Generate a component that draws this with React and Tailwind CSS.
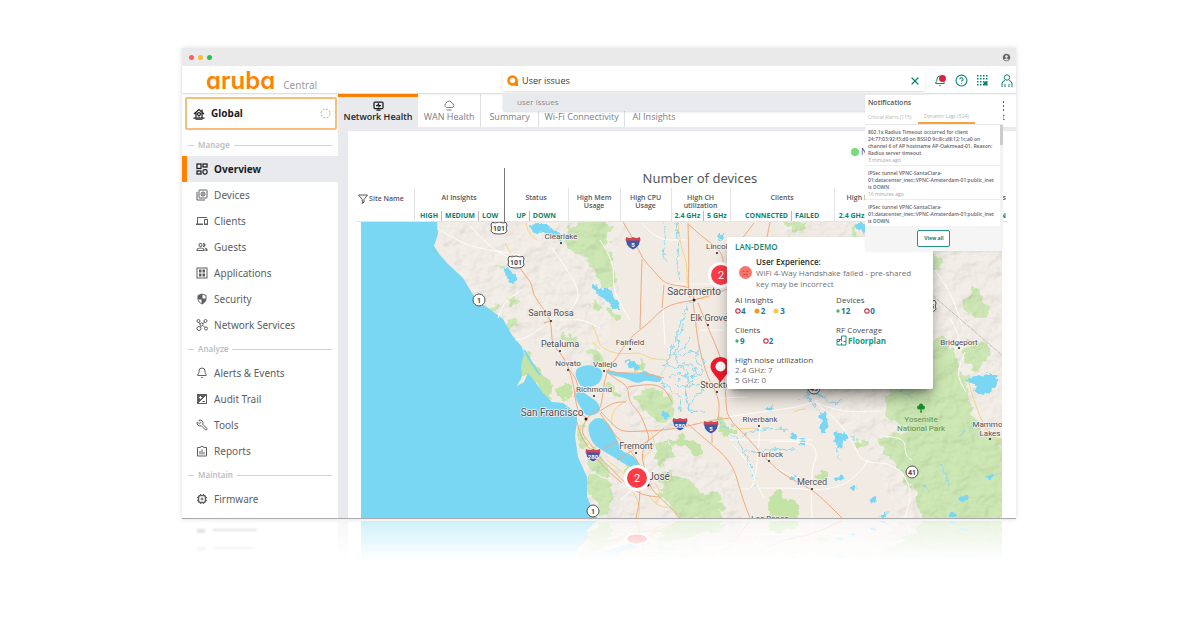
import React from "react";
import { X, Bell, CircleHelp, Cloud, Wrench, House, Wifi, Sparkles, FileText } from "lucide-react";
import { MdOutlineDevices, MdOutlinePeopleAlt, MdAccountCircle } from "react-icons/md";

const orangeRoads = [
  "M623 222L634 240 642 258 653 270 665 284 683 286 690 288 694 299",
  "M642 259L641 290 640 329",
  "M695 300L680 302 663 308 652 320 640 330 630 338 622 349 618 356 610 366 605 378 603 392 601 408 595 412 588 417",
  "M664 285L662 308",
  "M688 223L689 260 688 287 690 298",
  "M688 224L706 240 717 247 724 258 722 272",
  "M694 300L712 295 730 288",
  "M693 302L696 325 698 342 703 362 708 378 719 398 719 412 718 420 712 427 712 443",
  "M698 303L709 330 720 355 724 372 726 400 727 417 747 437 758 450 770 463 783 474 797 482 813 490 828 504 842 518",
  "M601 412L612 424 622 432 645 431 667 430 693 425 712 420 730 418",
  "M688 424L699 434 710 443 724 455 733 467 738 482 742 497 750 518",
  "M607 372L617 380 628 386 629 402 640 413 646 428 650 440 641 452 644 466 650 487 657 495 668 505 680 518",
  "M628 387L645 384 663 386 672 402",
  "M588 417L579 430 590 443 600 458 610 467 621 479 630 487 642 495 658 497",
  "M577 422L580 436 592 452 604 468 622 483",
  "M600 413L611 430 621 442 632 452 640 466 651 482",
  "M617 460L628 453 650 440 664 428",
  "M603 449L618 441",
  "M512 255L522 272 532 283 533 295 543 308 551 320 552 345 560 352 568 366 573 382 575 395 577 410 586 418",
  "M544 323L551 321",
  "M568 368L580 382 574 397",
  "M606 370L618 374 640 372 664 378",
  "M770 222L766 243M754 223L741 240",
  "M640 487L640 500 636 518",
  "M600 411L613 402 626 402",
];
const yellowRoads = [
  "M505 243L511 254",
  "M526 223L528 233 537 240",
  "M592 325L598 337 600 347 618 355 640 352 650 359 668 360",
  "M678 223L680 245 687 262 687 285",
  "M648 495L656 505 668 508M655 483L662 492 656 505",
  "M612 425L610 412 627 400M650 430L658 444 643 458",
  "M600 349L592 342",
  "M695 291L708 286 716 290 710 298 697 299",
  "M738 429L755 428",
  "M794 412L800 409 806 409",
  "M968 380L974 402 985 428 995 438 1003 441",
  "M607 460L630 478 640 490M633 492L641 505 638 518",
];
const whiteRoads = [
  "M437 228L460 243 488 250 520 255",
  "M470 226L488 246 510 258M552 248L575 280 580 300 560 320",
  "M522 290L505 300 498 318M560 320L580 318 600 328",
  "M552 320L528 338 515 340M733 445L748 460 757 485 764 498",
  "M668 284L730 284M700 330L724 330M663 308L665 345",
  "M730 440L770 440 813 440M760 425L757 489 740 489",
  "M770 442L810 440 818 454 811 470 812 518M813 490L840 489 862 470 868 460",
  "M815 402L835 412 880 411M815 402L838 420 855 446 862 463 895 463 913 489 905 518",
  "M878 436L905 436 905 455 912 460M760 488L795 488 812 490",
  "M771 465L800 480M720 398L748 397M642 223L655 240 686 240",
  "M965 352L955 372 966 392M950 318L962 338 954 352",
  "M727 417L760 412 800 407 818 400M935 270L950 290 962 325",
  "M600 240L615 262 612 290 630 320M620 500L655 470",
];
const bays = [
  "M577 368L590 364 603 370 602 379 596 386 582 388 577 380 575 373Z",
  "M578 388L587 395 598 402 601 411 594 415 586 416 581 408 575 398Z",
  "M588 424L597 417 606 420 613 431 618 442 621 451 634 456 639 464 637 469 626 465 617 459 605 452 594 445 589 435Z",
  "M606 370L616 372 628 373 640 374 644 370 650 374 663 377 660 383 646 380 637 384 626 378 615 376 606 373Z",
];
const lakes = [
  "M529 223L548 223 551 229 560 232 563 239 561 243 552 236 541 232 531 231Z",
  "M590 281L601 290 606 287 612 294 617 300 622 312 613 309 608 300 597 295Z",
  "M502 269L508 267 512 273 518 276 516 284 508 281 507 276Z",
  "M627 358L634 361 641 368 633 370 627 366Z",
  "M967 378L974 378 984 374 996 375 998 384 992 391 982 395 973 390 977 384 969 383Z",
  "M818 413L827 411 829 421 826 428 828 434 819 431 823 422Z",
  "M832 432L840 431 852 438 843 440 844 450 837 446Z",
  "M798 439L807 439 806 446 799 446Z",
  "M871 498L877 495 875 504 869 503Z",
  "M985 478L993 473 995 477 989 481Z",
  "M957 498L969 495 967 501 959 502Z",
  "M851 485L856 485 854 492 850 491Z",
  "M881 514L887 511 886 518 880 518Z",
  "M950 511L958 514 956 518 949 518Z",
  "M765 407L774 405 773 412 767 411Z",
  "M855 223L866 223 866 234 858 230Z",
  "M716 235L723 232 725 238 720 241Z",
  "M663 412L670 413 667 420 662 417Z",
  "M790 434L797 433 796 440 790 438Z",
  "M789 476L796 476 795 480 789 480Z",
  "M833 478L837 476 845 477 842 481 835 480Z",
];
const streams = [
  "M663 223L667 240 662 252 667 262",
  "M676 224L680 246 676 262 680 280",
  "M690 300L684 314 682 334 672 344 668 362 660 377",
  "M684 318L676 330 680 342 673 357 684 368 690 380 684 392 689 410",
  "M668 355L685 356 690 350 703 356 704 372 694 378 678 373 670 378",
  "M663 365L676 369 686 362 697 368 690 385 673 388 680 378",
  "M682 388L698 382 706 390 692 398 686 412 706 411",
  "M690 336L686 348 677 352M700 345L694 362 703 366",
  "M652 374L662 384 674 390 683 402 679 412",
  "M718 420L730 432 742 446 749 464 756 480 757 487",
  "M742 436L755 430 775 428 790 431",
  "M745 452L765 450 795 449M808 370L806 396 814 404 820 414",
  "M798 400L815 388 832 406 841 400",
  "M840 440L836 450 841 462M850 435L858 444",
  "M940 464L950 480 948 490M975 420L971 428M988 372L985 380",
  "M922 484L929 492M965 430L958 438M900 391L912 396",
];
const greens = [
  "M884 400L900 372 925 360 930 340 945 338 955 354 962 372 970 378 967 396 975 412 983 432 1003 444 1010 450 1010 526 920 526 918 500 906 480 897 466 880 448 878 438 905 434 900 424 885 416Z",
  "M577 219L612 219 606 240 614 252 610 262 618 280 604 288 594 278 588 262 578 250 570 252 564 240Z",
  "M963 298L972 294 975 282 981 300 991 306 986 316 973 314 966 318Z",
  "M961 346L978 340 991 350 987 364 976 371 962 360Z",
  "M525 350L534 360 546 376 554 402 544 394 532 380 524 371 518 386 520 368Z",
  "M556 386L564 381 576 390 570 401 559 398Z",
  "M509 297L519 298 518 304 509 304Z",
  "M486 305L498 306 495 311 487 310Z",
  "M503 320L515 318 519 325 510 330Z",
  "M498 265L506 267 502 272Z",
  "M632 393L650 387 664 391 673 404 675 420 660 425 650 412 638 410Z",
  "M653 441L668 439 675 450 667 465 655 461Z",
  "M656 474L672 472 684 479 696 489 708 498 722 505 724 522 678 522 668 502 660 494Z",
  "M584 476L600 474 612 488 614 504 604 518 596 506 588 495Z",
  "M666 440L690 436 704 448 702 457 684 449Z",
  "M630 360L646 362 645 371 635 373Z",
  "M768 490L782 492 790 504 800 510 798 522 770 518Z",
  "M853 440L867 435 870 447 859 450Z",
  "M818 474L829 472 827 481 817 481Z",
  "M714 417L729 420 735 432 729 441 719 430Z",
  "M782 221L812 221 792 234Z",
  "M930 250L939 262 941 274 930 270Z",
  "M576 424L588 432 591 447 579 445Z",
  "M593 446L605 462 612 478 599 474 583 462Z",
  "M848 221L863 240 853 248Z",
  "M558 330L576 338 582 351 567 343Z",
  "M586 346L600 351 609 364 594 361Z",
  "M588 298L601 305 599 314Z",
  "M606 304L618 314 616 322 606 314Z",
  "M624 336L634 338 632 344 624 343Z",
  "M604 383L616 388 620 396 608 394Z",
  "M624 470L636 460 648 476 636 486Z",
  "M700 495L714 490 726 498 714 504Z",
];

/* Rounds the corners of a polyline by running quadratic curves through its midpoints. */
function smooth(d) {
  const closed = d.endsWith("Z");
  return d
    .split("M")
    .filter(Boolean)
    .map((part) => {
      const n = part.match(/[\d.]+/g).map(Number);
      const p = [];
      for (let i = 0; i < n.length; i += 2) p.push([n[i], n[i + 1]]);
      const mid = (a, b) => (a[0] + b[0]) / 2 + " " + (a[1] + b[1]) / 2;
      if (closed) {
        const end = p[p.length - 1];
        return "M" + mid(end, p[0]) + p.map((a, i) => "Q" + a.join(" ") + " " + mid(a, p[(i + 1) % p.length])).join("") + "Z";
      }
      let out = "M" + p[0].join(" ");
      for (let i = 1; i < p.length - 1; i++) out += "Q" + p[i].join(" ") + " " + mid(p[i], p[i + 1]);
      return out + "L" + p[p.length - 1].join(" ");
    })
    .join("");
}
const Shapes = ({ list }) => list.map((d) => <path key={d} d={smooth(d)} />);

function Terrain({ prefix }) {
  const hills = prefix + "-hills";
  const relief = prefix + "-relief";
  const rough = prefix + "-rough";
  const ragged = prefix + "-ragged";
  return (
    <g>
      <defs>
        <clipPath id={hills}>
          <path d="M430 222H628L612 262 622 300 604 350 618 370 570 372 553 350 520 340 470 290ZM575 420L600 445 625 480 650 500 640 518H590ZM600 385H672L680 425 660 440 735 470 742 518H660L645 480 640 440ZM780 222H1003V518H900L870 455 838 420 812 400 790 330Z" />
        </clipPath>
        <filter id={relief} x="0%" y="0%" width="100%" height="100%">
          <feTurbulence type="fractalNoise" baseFrequency="0.06 0.07" numOctaves="3" seed="8" />
          <feDiffuseLighting surfaceScale="5" lightingColor="#ffffff">
            <feDistantLight azimuth="225" elevation="60" />
          </feDiffuseLighting>
        </filter>
        <filter id={rough}>
          <feTurbulence type="fractalNoise" baseFrequency="0.09" numOctaves="3" seed="3" result="n" />
          <feDisplacementMap in="SourceGraphic" in2="n" scale="16" xChannelSelector="R" yChannelSelector="G" />
        </filter>
        <filter id={ragged}>
          <feTurbulence type="fractalNoise" baseFrequency="0.2" numOctaves="2" seed="5" result="n" />
          <feDisplacementMap in="SourceGraphic" in2="n" scale="7" xChannelSelector="R" yChannelSelector="G" />
        </filter>
      </defs>
      <rect x="361" y="218" width="652" height="304" fill="#f1ebe3" />
      <g fill="#c3e4a6" filter={"url(#" + rough + ")"}>
        <Shapes list={greens} />
      </g>
      <g clipPath={"url(#" + hills + ")"} opacity="0.17">
        <rect x="361" y="222" width="652" height="298" filter={"url(#" + relief + ")"} />
      </g>
      <path
        d="M361 222H437L438 234 434 246 440 255 447 263 463 278 472 293 480 302 488 308 503 319 512 335 522 347 524 354 521 366 522 376 517 386 524 382 528 373 536 383 543 393 552 402 563 403 571 409 577 414 577 422 575 436 578 457 587 477 587 497 593 510 599 522H361Z"
        fill="#79d7f4"
      />
      <path d="M524 350L533 365 540 375" stroke="#79d7f4" strokeWidth="2" fill="none" />
      <g fill="#79d7f4">
        <Shapes list={bays} />
      </g>
      <g fill="#79d7f4" filter={"url(#" + ragged + ")"}>
        <Shapes list={lakes} />
      </g>
      <g fill="none" stroke="#86d8f0" strokeWidth="1" filter={"url(#" + ragged + ")"}>
        <Shapes list={streams} />
      </g>
      <g fill="none" stroke="#ffffff" strokeWidth="0.9">
        <Shapes list={whiteRoads} />
      </g>
      <g fill="none" stroke="#f6d47c" strokeWidth="0.9">
        <Shapes list={yellowRoads} />
      </g>
      <g fill="none" stroke="#f1aa80" strokeWidth="1">
        <Shapes list={orangeRoads} />
      </g>
      <path d="M880 250L1003 356" stroke="#b3aca4" strokeWidth="0.7" strokeDasharray="4 1" fill="none" />
    </g>
  );
}

const places = [
  ["Clearlake", 561, 239, 8, 561, 243],
  ["Santa Rosa", 551, 316, 9, 551, 321],
  ["Petaluma", 560, 347, 9, 560, 351],
  ["Novato", 568, 366, 8, 568, 370],
  ["Vallejo", 605, 367, 8, 604, 371],
  ["Fairfield", 630, 345, 8, 630, 349],
  ["Richmond", 594, 392, 8, 594, 396],
  ["San Francisco", 552, 416, 10, 586, 419],
  ["Fremont", 636, 449, 9, 636, 453],
  ["José", 659, 480, 10, 648, 485],
  ["Sacramento", 694, 295, 10, 694, 300],
  ["Elk Grove", 709, 321, 9, 708, 325],
  ["Lincoln", 719, 249, 8, 717, 253],
  ["Stockton", 718, 388, 9, 717, 392],
  ["Riverbank", 760, 422, 8, 759, 426],
  ["Turlock", 770, 457, 8, 769, 461],
  ["Merced", 812, 485, 9, 812, 489],
  ["Bridgeport", 959, 345, 8, 959, 348],
  ["Mammoth", 991, 427, 8, 0, 0],
  ["Lakes", 990, 436, 8, 990, 439],
  ["Los Banos", 770, 521, 8, 0, 0],
];

function Interstate({ x, y, n }) {
  return (
    <g transform={"translate(" + x + " " + y + ")"}>
      <path d="M-7 -6Q-3 -4 0 -6 3 -4 7 -6 9 3 0 7 -9 3 -7 -6Z" fill="#4259a8" stroke="#fff" strokeWidth="0.7" />
      <path d="M-7 -6Q-3 -4 0 -6 3 -4 7 -6L7.500 -2.500H-7.500Z" fill="#d9434d" />
      <text y="3.500" textAnchor="middle" fontSize="6" fontWeight="700" fill="#fff">{n}</text>
    </g>
  );
}
function Route({ x, y, n }) {
  return (
    <g transform={"translate(" + x + " " + y + ")"}>
      <circle r="6" fill="#fff" stroke="#555" strokeWidth="1" />
      <text y="2.500" textAnchor="middle" fontSize="7" fontWeight="700" fill="#444">{n}</text>
    </g>
  );
}
function UsRoute({ x, y, n }) {
  return (
    <g transform={"translate(" + x + " " + y + ")"}>
      <path d="M-7 -5.500Q-3.500 -4.500 0 -6 3.500 -4.500 7 -5.500L8 -3Q6.500 0 8 3 7 6 0 6 -7 6 -8 3 -6.500 0 -8 -3Z" fill="#fff" stroke="#555" strokeWidth="1" />
      <text y="2.500" textAnchor="middle" fontSize="7" fontWeight="700" fill="#444">{n}</text>
    </g>
  );
}
function Cluster({ x, y }) {
  return (
    <g transform={"translate(" + x + " " + y + ")"}>
      <circle r="13" fill="#fff" />
      <circle r="10" fill="#fb3c46" />
      <text y="4" textAnchor="middle" fontSize="11" fill="#fff">2</text>
    </g>
  );
}

function MapCanvas() {
  return (
    <svg viewBox="361 222 641 296" preserveAspectRatio="xMinYMin slice" className="absolute inset-0 h-full w-full font-['Roboto',sans-serif]" role="img" aria-label="Site map">
      <Terrain prefix="map" />
      <g fill="#4d4d52" textAnchor="middle" stroke="#f7f3ee" strokeWidth="1.5" paintOrder="stroke" strokeLinejoin="round">
        {places.map(([n, x, y, s]) => <text key={n} x={x} y={y} fontSize={s}>{n}</text>)}
      </g>
      <g fill="#222">
        {places.map(([n, , , s, dx, dy]) => dx ? <circle key={n} cx={dx} cy={dy} r={s > 9 ? 1.5 : 1} /> : null)}
      </g>
      <g fill="#5f9050" textAnchor="middle" fontSize="8">
        <text x="921" y="422">Yosemite</text>
        <text x="921" y="431">National Park</text>
        <path d="M921 403.500a2 2 0 0 1 2 2 2 2 0 0 1 0 4l-1.500 0 .5 3h-2l.5-3-1.500 0a2 2 0 0 1 0-4 2 2 0 0 1 2-2z" fill="#17912f" />
      </g>
      <UsRoute x={499} y={228} n="101" />
      <UsRoute x={516} y={262} n="101" />
      <Route x={479} y={300} n="1" />
      <Route x={593} y={511} n="1" />
      <Route x={912} y={472} n="41" />
      <Route x={814} y={388} n="49" />
      <UsRoute x={928} y={306} n="395" />
      <Interstate x={633} y={243} n="5" />
      <Interstate x={680} y={424} n="580" />
      <Interstate x={711} y={427} n="5" />
      <Interstate x={593} y={455} n="280" />
      <Cluster x={721} y={275} />
      <Cluster x={637} y={478} />
      <path d="M720.500 382.500C716 375.500 710.500 371.500 710.500 366.500a10 9.500 0 0 1 20 0C730.500 371.500 725 375.500 720.500 382.500Z" fill="#f0182c" />
      <circle cx="720.500" cy="366.500" r="5" fill="#fff" />
    </svg>
  );
}

const ic = { width: 12, height: 12, viewBox: "0 0 24 24", fill: "none", stroke: "currentColor", strokeWidth: 2, "aria-hidden": true };
const icons = {
  Overview: <svg {...ic} strokeWidth="2.500"><rect x="2" y="2" width="8" height="9" /><rect x="2" y="16" width="8" height="6" /><rect x="14" y="2" width="8" height="6" /><rect x="14" y="13" width="8" height="9" rx="3" /></svg>,
  Devices: <svg {...ic}><path d="M2 6v16h16" /><rect x="6" y="2" width="16" height="16" rx="1" /><circle cx="14" cy="10" r="4" /><circle cx="14" cy="10" r="1" /></svg>,
  Clients: <MdOutlineDevices size={12} />,
  Guests: <MdOutlinePeopleAlt size={12} />,
  Applications: <svg {...ic}><rect x="2" y="2" width="20" height="20" /><g fill="currentColor"><rect x="7" y="6" width="3" height="4" /><rect x="14" y="6" width="3" height="4" /><rect x="7" y="14" width="3" height="4" /><rect x="14" y="14" width="3" height="4" /></g></svg>,
  Security: <svg {...ic}><path d="M12 2l8 3v7c0 5-4 8-8 10-4-2-8-5-8-10V5z" /><path d="M12 3v9h-7V6zM12 12h7c0 4-3 7-7 9z" fill="currentColor" /></svg>,
  "Network Services": <svg {...ic}><circle cx="5" cy="4" r="3" /><circle cx="19" cy="4" r="3" /><circle cx="11" cy="11" r="3" /><circle cx="6" cy="19" r="4" /><circle cx="20" cy="19" r="3" /><path d="M5 7l4 3M17 6l-4 4M9 14l-2 2M14 13l4 4" /></svg>,
  "Alerts & Events": <Bell size={12} strokeWidth={2} />,
  "Audit Trail": <svg {...ic}><rect x="3" y="3" width="18" height="18" /><path d="M3 21V3h18z" fill="currentColor" /><path d="M6 9h6M9 6v6" stroke="#fff" /><path d="M13 17h5" /></svg>,
  Tools: <Wrench size={12} strokeWidth={2} className="-scale-x-100" />,
  Reports: <svg {...ic}><path d="M3 5h5l4-3 4 3h5v17H3z" /><path d="M8 19v-7M12 19V9M16 19v-5" /></svg>,
  Firmware: <svg {...ic} strokeWidth="3"><rect x="5" y="5" width="14" height="14" rx="4" /><path d="M9 2v3M15 2v3M9 19v3M15 19v3M2 9h3M2 15h3M19 9h3M19 15h3" strokeWidth="2" /><circle cx="12" cy="12" r="2" strokeWidth="2" /></svg>,
};
const sections = [
  ["Manage", ["Overview", "Devices", "Clients", "Guests", "Applications", "Security", "Network Services"]],
  ["Analyze", ["Alerts & Events", "Audit Trail", "Tools", "Reports"]],
  ["Maintain", ["Firmware"]],
];

function Sidebar() {
  return (
    <aside className="w-[156px] shrink-0 bg-white pb-1.5 pt-[3px] font-['Noto_Sans',sans-serif]">
      <button className="ml-[3px] mb-1 flex h-[33px] w-[152px] items-center gap-1.5 rounded-xs border-2 border-[#f9bd7a] pl-1.5 pr-1 text-[10px] font-bold text-[#222]">
        <svg width="12" height="12" viewBox="0 0 24 24" fill="none" stroke="currentColor" strokeWidth="2.500"><path d="M2 12L12 3l10 9M6 10v9M18 10v9M1 20h22" /><path d="M18 3v5" /><circle cx="12" cy="12" r="3" /><path d="M12 15v5M5 23h14" strokeWidth="1.500" /></svg>
        Global
        <svg className="ml-auto" width="11" height="11" viewBox="0 0 11 11"><circle cx="5.500" cy="5.500" r="4.500" fill="none" stroke="#aaa" strokeDasharray="2 1.500" /></svg>
      </button>
      <nav aria-label="Main">
        {sections.map(([title, items]) => (
          <section key={title}>
            <h2 className="flex h-[22px] items-center gap-1 pl-1.5 pr-1.5 text-[8px] font-semibold text-[#bcbec2] before:h-px before:w-1.5 before:bg-[#cfd1d4] after:h-px after:flex-1 after:bg-[#cfd1d4]">{title}</h2>
            <ul>
              {items.map((item) => (
                <li key={item}>
                  <a
                    href="#"
                    aria-current={item === "Overview" ? "page" : undefined}
                    className={
                      item === "Overview"
                        ? "flex h-[26px] items-center gap-1.5 border-l-[5px] border-[#ff8300] bg-[#e9eaee] pl-2 text-[10px] font-bold text-[#1d1d1f]"
                        : "flex h-[26px] items-center gap-1.5 border-l-[5px] border-transparent pl-2 text-[10px] text-[#5d5e62]"
                    }
                  >
                    <span className="flex w-[13px] justify-center">{icons[item]}</span>
                    {item}
                  </a>
                </li>
              ))}
            </ul>
          </section>
        ))}
      </nav>
    </aside>
  );
}

function BrandMark() {
  return (
    <svg width="11" height="11" viewBox="0 0 11 11" aria-hidden="true">
      <circle cx="5.500" cy="5.500" r="4" fill="none" stroke="#ff8300" strokeWidth="2.500" />
      <path d="M8.500 6h2.500v5h-3z" fill="#ff8300" />
    </svg>
  );
}

function Header() {
  return (
    <header className="relative z-20 flex h-7 items-center border-b border-[#dedfe2] bg-white pt-0.5 shadow-xs">
      <div className="flex w-[321px] shrink-0 items-baseline gap-2 pl-6">
        <span className="text-[24px] leading-6 font-semibold text-[#ff8300] [font-family:Inter,sans-serif] [font-feature-settings:'cv11'_1]">aruba</span>
        <span className="font-['Noto_Sans',sans-serif] text-[10px] text-[#9a9b9f]">Central</span>
      </div>
      <form role="search" className="relative flex h-5 flex-1 items-center gap-1 px-1 shadow-sm">
        <BrandMark />
        <label htmlFor="q" className="sr-only">Search</label>
        <input id="q" defaultValue="User issues" className="h-5 min-w-0 flex-1 bg-transparent text-[9px] text-[#3a3a3e] outline-none" />
        <button type="button" aria-label="Clear search" className="text-[#0b8571]"><X size={12} strokeWidth={2.5} /></button>
        <button type="button" className="absolute inset-x-0 top-[22px] h-[18px] bg-[#e9eaee] pl-3.5 text-left text-[8px] text-[#8c8d92] shadow-sm">user issues</button>
      </form>
      <div className="flex w-[91px] shrink-0 items-center gap-[9px] pl-[9px] text-[#0b8571]">
        <button aria-label="Notifications" className="relative"><Bell size={12} strokeWidth={2} /><span className="absolute top-0 right-0 size-[7px] rounded-full bg-[#d6263c]" /></button>
        <button aria-label="Help"><CircleHelp size={13} strokeWidth={2} /></button>
        <button aria-label="Apps">
          <svg width="11" height="11" viewBox="0 0 11 11" fill="currentColor">
            {[0, 3, 6, 9].map((x) => [0, 3, 6, 9].map((y) => <rect key={x + "-" + y} x={x} y={y} width="1.500" height="1.500" />))}
            <circle cx="8.500" cy="8.500" r="2" />
          </svg>
        </button>
        <button aria-label="Account" className="ml-1">
          <svg width="12" height="13" viewBox="0 0 12 13" fill="none" stroke="currentColor"><circle cx="6" cy="3.500" r="2.700" /><path d="M1 13V10Q1 7 4 6.500M11 13V10Q11 7 8 6.500M4 13V10M8 13V10" /></svg>
        </button>
      </div>
    </header>
  );
}

const tab = "flex h-[33px] flex-col items-center justify-end border-r border-[#dedfe2] pb-1 text-[9px] leading-3 text-[#7d7e82]";
function Tabs() {
  return (
    <div className="flex border-b-4 border-[#e9eaee] bg-white">
      <button className="flex h-[33px] w-20 flex-col items-center justify-end border-t-[3px] border-[#ff8300] bg-[#e9eaee] pb-1 text-[9px] leading-3 font-semibold text-[#1d1d1f]">
        <svg width="11" height="10" viewBox="0 0 22 20" fill="none" stroke="currentColor" strokeWidth="2.500"><rect x="2" y="2" width="18" height="13" rx="2" /><path d="M7 18h8M6 9h3l2-3 1 5 1-2h3" /></svg>
        Network Health
      </button>
      <button className={tab + " w-[63px]"}>
        <svg width="12" height="11" viewBox="0 0 24 22" fill="none" stroke="currentColor" strokeWidth="2"><path d="M7 15a5 5 0 0 1-.5-9A6 6 0 0 1 18 7a4 4 0 0 1-.5 8zM7 20h10" /></svg>
        WAN Health
      </button>
      <button className={tab + " w-[58px]"}><FileText size={10} />Summary</button>
      <button className={tab + " w-[86px]"}><Wifi size={10} />Wi-Fi Connectivity</button>
      <button className={tab + " w-[58px] border-r-0"}><Sparkles size={10} />AI Insights</button>
      <button className="ml-auto flex flex-col items-end justify-end pr-[11px] pb-1 text-[9px] leading-3 font-semibold text-[#0b8571]">
        <svg width="4" height="10" viewBox="0 0 4 10" fill="currentColor"><path d="M0 0h3v2H0zM0 4h3v2H0zM0 8h3v2H0z" /></svg>
        List
      </button>
    </div>
  );
}

function Split({ items }) {
  return (
    <span className="flex justify-center text-[7px] leading-[10px] font-bold whitespace-nowrap text-[#0b8571]">
      {items.map((s) => <a href="#" key={s} className="border-l border-[#b9bbbf] px-[3px] first:border-0">{s}</a>)}
    </span>
  );
}

const cols = [
  ["AI Insights", ["HIGH", "MEDIUM", "LOW"], "border-r border-[#77787c]"],
  ["Status", ["UP", "DOWN"], "border-r border-[#e3e4e6]"],
  ["High Mem Usage", null, "border-r border-[#e3e4e6]"],
  ["High CPU Usage", null, "border-r border-[#e3e4e6]"],
  ["High CH utilization", ["2.4 GHz", "5 GHz"], "border-r border-[#e3e4e6]"],
  ["Clients", ["CONNECTED", "FAILED"], "border-r border-[#e3e4e6]"],
  ["High Noise", ["2.4 GHz", "5 GHz"], ""],
];

function HealthTable() {
  return (
    <div className="pr-[9px] pl-2">
      <table className="w-full table-fixed border-b border-[#e3e4e6] text-[7px] leading-2 text-[#55565a]">
        <colgroup>
          <col className="w-[58px]" /><col className="w-[90px]" /><col className="w-[64px]" /><col className="w-[52px]" /><col className="w-[51px]" /><col className="w-[59px]" /><col className="w-[104px]" /><col className="w-[61px]" /><col />
        </colgroup>
        <thead>
          <tr className="h-5">
            <td colSpan="2" className="border-r border-[#77787c]" />
            <th colSpan="6" className="p-0 text-center font-['Noto_Sans',sans-serif] text-[13px] leading-4 font-normal">Number of devices</th>
            <td />
          </tr>
          <tr className="h-[33px] align-top">
            <th className="border-r border-[#e3e4e6] p-0 pt-1.5 font-semibold">
              <span className="flex items-center gap-px pl-0.5">
                <svg width="10" height="10" viewBox="0 0 10 10" fill="none" stroke="currentColor"><path d="M.5 1h9L6 5.500V8L4.300 9.500V5.500z" /></svg>
                Site Name
              </span>
            </th>
            {cols.map(([name, parts, line]) => (
              <th key={name} className={"p-0 pt-1.5 text-center font-semibold " + line}>
                <span className="flex h-[27px] flex-col items-center justify-between">
                  <span className="block w-[42px]">{name}</span>
                  {parts && <Split items={parts} />}
                </span>
              </th>
            ))}
            <th className="p-0 pt-1.5 pr-px font-semibold">
              <span className="flex h-[27px] flex-col items-end justify-between">Gateway Status<span className="text-[7px] leading-[10px] font-bold text-[#0b8571]">DOWN</span></span>
            </th>
          </tr>
        </thead>
      </table>
    </div>
  );
}

const num = "font-bold text-[#1d78a6]";
const Ring = ({ c }) => <svg width="6" height="6" viewBox="0 0 6 6"><circle cx="3" cy="3" r="2.200" fill="none" stroke={c} strokeWidth="1.200" /></svg>;
const Dot = ({ c, r }) => <svg width={r * 2} height={r * 2} viewBox="0 0 12 12"><circle cx="6" cy="6" r="5" fill={c} /></svg>;

function SitePopup() {
  return (
    <article className="absolute top-[15px] left-[366px] w-[206px] rounded-xs bg-white px-2 py-1 text-[8px] leading-[11px] text-[#48494d] shadow-lg shadow-black/40">
      <h3 className="font-semibold text-[#0b8571]">LAN-DEMO</h3>
      <div className="mt-1 flex items-center gap-1 pl-1">
        <svg className="shrink-0" width="13" height="13" viewBox="0 0 26 26" fill="none" stroke="#c0463f" strokeWidth="1.800"><circle cx="13" cy="13" r="13" fill="#f8746a" stroke="none" /><path d="M7 10l4 1M19 10l-4 1M8 18q5-4 10 0" /></svg>
        <p className="text-[#6f7074]"><b className="block font-semibold text-[#2e2e31]">User Experience:</b>WiFi 4-Way Handshake failed - pre-shared key may be incorrect</p>
      </div>
      <dl className="mt-[5px] grid grid-cols-[101px_1fr] gap-y-2">
        <div>
          <dt>AI Insights</dt>
          <dd className={"flex gap-2 " + num}><span className="flex items-center"><Ring c="#cf2f44" />4</span><span className="flex items-center gap-px"><Dot c="#f39a2d" r={3} />2</span><span className="flex items-center gap-px"><Dot c="#ffc44d" r={3} />3</span></dd>
        </div>
        <div>
          <dt>Devices</dt>
          <dd className={"flex gap-3.5 " + num}><span className="flex items-center gap-px"><Dot c="#3fb768" r={2} />12</span><span className="flex items-center"><Ring c="#cf2f44" />0</span></dd>
        </div>
        <div>
          <dt>Clients</dt>
          <dd className={"flex gap-4.5 " + num}><span className="flex items-center gap-px"><Dot c="#3fb768" r={2} />9</span><span className="flex items-center"><Ring c="#cf2f44" />2</span></dd>
        </div>
        <div>
          <dt>RF Coverage</dt>
          <dd>
            <a href="#" className="flex items-center gap-px font-bold text-[#159783]">
              <svg width="11" height="11" viewBox="0 0 22 22" fill="none" stroke="currentColor" strokeWidth="2"><path d="M11 2h9v18H2V9h9zM11 9v4M20 13h-5M11 20v-4M7 9v4H2" /></svg>
              Floorplan
            </a>
          </dd>
        </div>
      </dl>
      <p className="mt-2 text-[#6f7074]"><span className="block text-[#48494d]">High noise utilization</span><span className="block leading-[10px]">2.4 GHz: 7</span><span className="block leading-[10px]">5 GHz: 0</span></p>
    </article>
  );
}

const notes = [
  ["802.1x Radius Timeout occurred for client 24:77:03:92:f3:d0 on BSSID 9c:8c:d8:12:1c:a0 on channel 6 of AP hostname AP-Oakmead-01, Reason: Radius server timeout", "3 minutes ago"],
  ["IPSec tunnel VPNC-SantaClara-01:datacenter_inet::VPNC-Amsterdam-01:public_inet is DOWN", "16 minutes ago"],
  ["IPSec tunnel VPNC-SantaClara-01:datacenter_inet::VPNC-Amsterdam-01:public_inet is DOWN", "17 minutes ago"],
];

function Notifications() {
  return (
    <section aria-label="Notifications" className="absolute top-[47px] right-[13px] z-30 w-[138px] bg-white shadow-xs">
      <h2 className="px-[3px] pt-1 text-[7px] leading-2 font-semibold text-[#55565a]">Notifications</h2>
      <div className="mt-1 flex border-b border-[#e9e9eb] pl-[3px] text-[5px] leading-[11px] text-[#b5b6ba]">
        <button className="w-[50px] text-left">Critical Alerts (115)</button>
        <button className="w-[57px] border-b-2 border-[#f8a13f]">Dynamic Lags (524)</button>
      </div>
      <div className="flex h-[101px] overflow-hidden">
        <ul className="flex-1">
          {notes.map(([t, when], i) => (
            <li key={i} className="border-b border-[#ececee] px-[3px] pt-1 pb-0.5 text-[5px] leading-[7px] text-[#66676b]">
              <p className="font-semibold wrap-anywhere">{t}</p>
              <p className="leading-[6px] text-[#a5a6aa]">{when}</p>
            </li>
          ))}
        </ul>
        <div className="w-[3px] bg-[#f3f3f4]"><div className="h-5 bg-[#cbccd0]" /></div>
      </div>
      <div className="flex h-[25px] items-center justify-center bg-[#f5f5f6]">
        <button className="h-[17px] w-[33px] rounded-xs border border-[#28917f] bg-white text-[5px] font-bold text-[#0b8571]">View all</button>
      </div>
    </section>
  );
}

function Reflection() {
  return (
    <div aria-hidden="true" className="mx-auto mt-0.5 flex h-10 w-[69.6%] opacity-35 [mask-image:linear-gradient(to_bottom,black,transparent)]">
      <div className="flex w-[156px] flex-col gap-3.5 pt-2 pl-[15px] text-[#8d8e92] blur-[1px]">
        <div className="flex gap-2"><span className="h-1 w-2 bg-current" /><span className="h-0.5 w-11 bg-current" /></div>
        <div className="flex gap-2"><span className="h-1 w-2 bg-current" /><span className="h-0.5 w-10 bg-current" /></div>
      </div>
      <div className="w-2.5 bg-[#e9eaee]" />
      <div className="relative mr-3.5 ml-[13px] flex-1 overflow-hidden">
        <svg viewBox="361 0 641 40" preserveAspectRatio="xMinYMin slice" className="absolute inset-0 h-full w-full">
          <g transform="matrix(1 0 0 -0.45 0 233)">
            <Terrain prefix="mirror" />
            <circle cx="637" cy="478" r="13" fill="#fff" />
            <circle cx="637" cy="478" r="10" fill="#fb3c46" />
          </g>
        </svg>
      </div>
    </div>
  );
}

export default function App() {
  return (
    <main className="min-h-screen bg-white pt-12 pr-0.5 font-['Open_Sans','Noto_Sans',sans-serif]">
      <div className="relative mx-auto w-[69.6%] border-b border-[#a9a9ab] bg-white shadow-[0_0_5px_rgba(0,0,0,0.14)]">
        <div className="flex h-[18px] items-center gap-1 bg-[#eaeaea] px-[7px]">
          <span className="size-[5px] rounded-full bg-[#ff5c5c]" />
          <span className="size-[5px] rounded-full bg-[#fdbb2d]" />
          <span className="size-[5px] rounded-full bg-[#1bc943]" />
          <MdAccountCircle size={9} className="ml-auto -mr-0.5 text-[#666]" />
        </div>
        <Header />
        <div className="flex">
          <Sidebar />
          <div className="flex min-w-0 flex-1 flex-col">
            <Tabs />
            <div className="flex flex-1 flex-col border-l-10 border-[#e9eaee] bg-white">
              <div className="flex h-[37px] items-center justify-end pr-[98px] pt-1 text-[9px] leading-3 text-[#55565a]">
                <span className="flex w-[67px] items-center gap-0.5"><span className="size-2 rounded-full bg-[#74dc78]" />No Issues</span>
              </div>
              <HealthTable />
              <div className="relative mr-3.5 ml-[13px] flex-1">
                <MapCanvas />
                <SitePopup />
              </div>
            </div>
          </div>
        </div>
        <Notifications />
      </div>
      <Reflection />
    </main>
  );
}
